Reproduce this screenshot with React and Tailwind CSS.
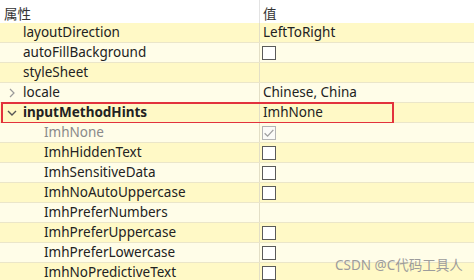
import React from 'react';

const rows = [
  { name: 'layoutDirection', value: 'LeftToRight' },
  { name: 'autoFillBackground', check: 'off' },
  { name: 'styleSheet' },
  { name: 'locale', value: 'Chinese, China', expander: 'closed' },
  { name: 'inputMethodHints', value: 'ImhNone', expander: 'open', bold: true, highlight: true },
  { name: 'ImhNone', check: 'on', disabled: true, sub: true },
  { name: 'ImhHiddenText', check: 'off', sub: true },
  { name: 'ImhSensitiveData', check: 'off', sub: true },
  { name: 'ImhNoAutoUppercase', check: 'off', sub: true },
  { name: 'ImhPreferNumbers', sub: true },
  { name: 'ImhPreferUppercase', check: 'off', sub: true },
  { name: 'ImhPreferLowercase', check: 'off', sub: true },
  { name: 'ImhNoPredictiveText', check: 'off', sub: true },
];

function Expander({ open }) {
  return (
    <svg width="10" height="10" viewBox="0 0 10 10" className="shrink-0">
      {open ? (
        <path d="M1 3 L5 7 L9 3" fill="none" stroke="#555" strokeWidth="1.4" />
      ) : (
        <path d="M3 1 L7 5 L3 9" fill="none" stroke="#999" strokeWidth="1.2" />
      )}
    </svg>
  );
}

function CheckBox({ checked }) {
  return (
    <span
      className={`flex h-[14px] w-[14px] items-center justify-center border ${checked ? 'border-[#b4b4b4] bg-[#fbfbf8]' : 'border-[#5a5a5a] bg-white'}`}
    >
      {checked && (
        <svg width="12" height="12" viewBox="0 0 11 11">
          <path d="M1.5 5.8 L4.2 8.4 L9.5 2.6" fill="none" stroke="#a0a0a0" strokeWidth="1.2" />
        </svg>
      )}
    </span>
  );
}

function PropertyRow({ row, index }) {
  const bg = index % 2 === 0 ? 'bg-[#fff9c6]' : 'bg-[#fffde8]';
  return (
    <div className={`relative grid h-5 grid-cols-[260px_1fr] border-b border-[#ebe6c9] ${bg}`}>
      <div className="flex items-center border-r border-[#e3dfc6]">
        <div className="flex w-[23px] justify-center pl-[1px]">
          {row.expander && <Expander open={row.expander === 'open'} />}
        </div>
        <span
          className={`${row.sub ? 'pl-[21px]' : ''} ${row.bold ? 'font-bold text-[#111]' : ''} ${row.disabled ? 'text-[#8a8a8a]' : 'text-[#222]'}`}
        >
          {row.name}
        </span>
      </div>
      <div className="flex items-center pl-[2px] text-[#222]">
        {row.value && <span className="pl-[1px]">{row.value}</span>}
        {row.check && <CheckBox checked={row.check === 'on'} />}
      </div>
      {row.highlight && (
        <div className="pointer-events-none absolute left-[1px] top-[-1px] h-[22px] w-[393px] border-2 border-[#e2323d]" />
      )}
    </div>
  );
}

export default function App() {
  return (
    <div
      className="relative h-[280px] w-[474px] overflow-hidden bg-white text-[13.5px] leading-none"
      style={{ fontFamily: '"Noto Sans", "Noto Sans CJK SC", sans-serif' }}
    >
      <div className="grid h-[23px] grid-cols-[260px_1fr] text-[#333]">
        <div className="border-r border-[#e3e3e3] pl-[4px] pt-[8px]">属性</div>
        <div className="pl-[3px] pt-[8px]">值</div>
      </div>
      {rows.map((row, i) => (
        <PropertyRow key={row.name} row={row} index={i} />
      ))}
      <div className="pointer-events-none absolute left-[335px] top-[259px] text-[13.5px] text-[#9c9c9c]">
        CSDN @C代码工具人
      </div>
    </div>
  );
}
